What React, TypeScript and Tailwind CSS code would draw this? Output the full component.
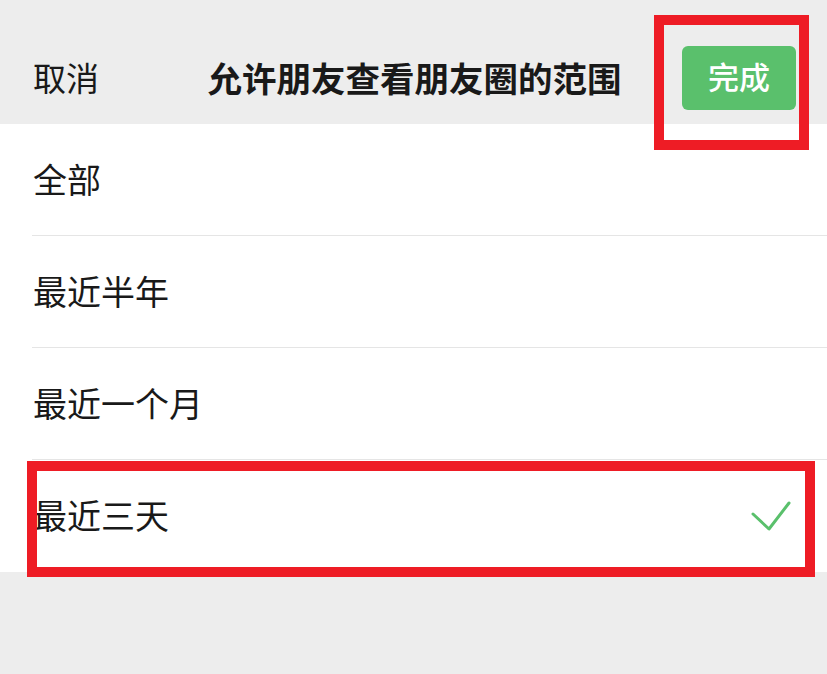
import React, { FC } from "react";

const options = ["全部", "最近半年", "最近一个月", "最近三天"];

const font = {
  fontFamily: '"Noto Sans CJK SC", "Noto Sans", sans-serif',
};

const CheckIcon: FC = () => (
  <svg width="40" height="32" viewBox="0 0 40 32" fill="none">
    <path
      d="M2 14 L18 29 L38 3"
      stroke="#5ac06c"
      strokeWidth="3"
      strokeLinecap="round"
      strokeLinejoin="round"
    />
  </svg>
);

const App: FC = () => {
  const selected = 3;

  return (
    <div
      className="relative w-[827px] h-[674px] bg-[#ededed] overflow-hidden text-[#191919]"
      style={font}
    >
      {/* header */}
      <div className="h-[124px] pt-[32px] pl-[33px] pr-[31px] grid grid-cols-[1fr_auto_1fr] items-center bg-[#ededed]">
        <span className="text-[33px] leading-none mt-[-2px]">取消</span>
        <h1 className="text-[34.5px] font-bold leading-none mt-[-2px]">
          允许朋友查看朋友圈的范围
        </h1>
        <button className="justify-self-end w-[114px] h-[64px] rounded-[6px] bg-[#5ac06c] text-white text-[31px] font-medium leading-none">
          <span className="relative top-[-3px]">完成</span>
        </button>
      </div>

      {/* list */}
      <ul className="bg-white">
        {options.map((item, index) => (
          <li key={item} className="pl-[32px]">
            <div
              className={`h-[112px] flex items-center justify-between pr-[36px] ${
                index < options.length - 1 ? "border-b border-[#e5e5e5]" : ""
              }`}
            >
              <span className="text-[34px] leading-none pl-[1px] mt-[-2px]">{item}</span>
              {index === selected && <CheckIcon />}
            </div>
          </li>
        ))}
      </ul>

      {/* annotation boxes */}
      <div className="absolute left-[654px] top-[15px] w-[155px] h-[135px] border-[10px] border-[#ee1c25]" />
      <div className="absolute left-[27px] top-[461px] w-[788px] h-[116px] border-[10px] border-[#ee1c25]" />
    </div>
  );
};

export default App;
